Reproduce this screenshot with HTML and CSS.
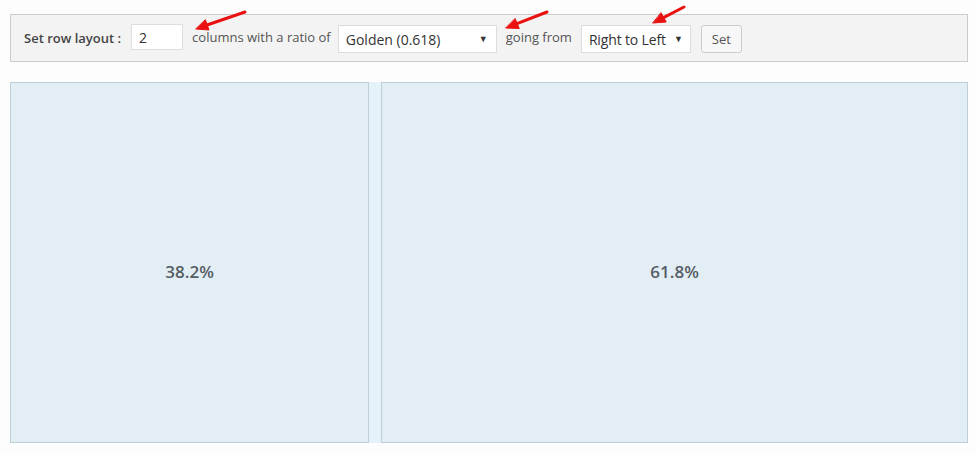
FILE: index.html
```html
<!DOCTYPE html>
<html>
<head>
<meta charset="utf-8">
<link rel="stylesheet" href="styles.css">
</head>
<body>
<div class="page">
  <div class="toolbar">
    <span class="label">Set row layout :</span>
    <input class="num" type="text" value="2">
    <span class="text text-cols">columns with a ratio of</span>
    <div class="select sel-ratio"><span>Golden (0.618)</span><span class="caret">▼</span></div>
    <span class="text">going from</span>
    <div class="select sel-dir"><span>Right to Left</span><span class="caret">▼</span></div>
    <button class="btn">Set</button>
  </div>
  <div class="row">
    <div class="col" style="width:37.5%"><span class="pct">38.2%</span></div>
    <div class="col col-grow"><span class="pct">61.8%</span></div>
  </div>
</div>
<svg class="arrows" width="977" height="454" viewBox="0 0 977 454">
  <g fill="#ea1111" stroke="#ea1111" stroke-linecap="round">
    <line x1="245" y1="12" x2="207" y2="25" stroke-width="3"/>
    <polygon points="196,29 209,30 205.5,20" stroke-width="1"/>
    <line x1="547" y1="12" x2="517" y2="23.6" stroke-width="3"/>
    <polygon points="506,28 519.3,28.5 515.2,18.8" stroke-width="1"/>
    <line x1="684" y1="7" x2="663.5" y2="17.6" stroke-width="3"/>
    <polygon points="653,23 666.2,22 661.2,13" stroke-width="1"/>
  </g>
</svg>
</body>
</html>
```
FILE: styles.css
```css
html, body {
  margin: 0;
  padding: 0;
  background: #fdfdfd;
  font-family: "Open Sans", "Liberation Sans", sans-serif;
  color: #555;
}
.page {
  padding: 14px 9px 11px 10px;
}
.toolbar {
  height: 46px;
  border: 1px solid #cccccc;
  background: #f3f3f3;
  display: flex;
  align-items: center;
  gap: 9px;
  padding: 0 0 0 13px;
  font-size: 13px;
}
.label {
  font-weight: 600;
  margin-right: 1px;
  color: #444;
}
.num {
  box-sizing: border-box;
  width: 52px;
  height: 26px;
  margin: -2px 0 0 0;
  border: 1px solid #dddddd;
  background: #fff;
  font-family: inherit;
  font-size: 14px;
  color: #333;
  padding: 0 7px;
  outline: none;
}
.text {
  color: #555;
  margin-top: -2px;
}
.text-cols {
  margin-right: -2px;
}
.select {
  box-sizing: border-box;
  height: 28px;
  border: 1px solid #dddddd;
  background: #fff;
  display: flex;
  align-items: center;
  justify-content: space-between;
  padding: 0 8px 0 7px;
  font-size: 14px;
  color: #333;
  margin-top: 2px;
}
.sel-ratio { width: 159px; }
.sel-dir { width: 110px; padding-right: 7px; }
.sel-dir span:first-child { letter-spacing: -0.15px; }
.caret {
  font-size: 9px;
  color: #333;
  margin-top: -2px;
}
.btn {
  box-sizing: border-box;
  height: 28px;
  width: 41px;
  margin: 2px 0 0 1px;
  border: 1px solid #cccccc;
  border-radius: 3px;
  background: #f7f7f7;
  font-family: inherit;
  font-size: 13px;
  color: #555;
  padding: 0;
}
.row {
  margin-top: 20px;
  height: 361px;
  display: flex;
  gap: 12px;
  background: #e5f2fa;
}
.col {
  box-sizing: border-box;
  border: 1px solid #bfcfd9;
  background: #e3eef4;
  display: flex;
  align-items: center;
  justify-content: center;
}
.col-grow { flex: 1; }
.pct {
  font-size: 17px;
  font-weight: 600;
  color: #555d66;
  margin-top: 18px;
}
.arrows {
  position: absolute;
  left: 0;
  top: 0;
  pointer-events: none;
}
```
